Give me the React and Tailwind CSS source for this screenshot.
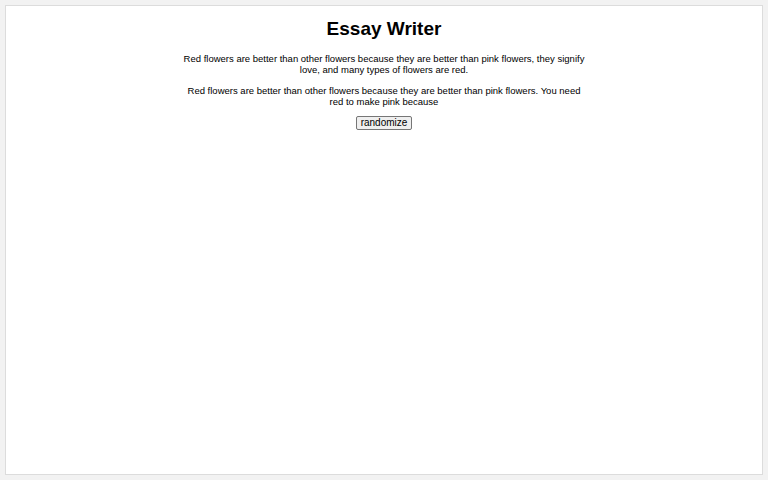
import React, { useState } from 'react';

const essays = [
  'Red flowers are better than other flowers because they are better than pink flowers, they signify love, and many types of flowers are red.',
  'Red flowers are better than other flowers because they are better than pink flowers. You need red to make pink because',
];

const App = () => {
  const [lines, setLines] = useState(essays);

  const shuffle = () => {
    setLines((prev) => [...prev].sort(() => Math.random() - 0.5));
  };

  return (
    <div className="min-h-[480px] w-full bg-[#f2f2f2] p-[5px] font-['Liberation_Sans',Arial,sans-serif] text-black">
      <div className="flex h-[470px] flex-col items-center border border-[#dcdcdc] bg-white pt-[9px]">
        <h1 className="text-[19px] font-bold leading-[28px]">Essay Writer</h1>
        <div className="mt-[10px] flex w-[408px] flex-col gap-[10px] text-center text-[9.5px] leading-[11px]">
          {lines.map((text, i) => (
            <p key={i}>{text}</p>
          ))}
        </div>
        <button
          onClick={shuffle}
          className="mt-[9px] flex h-[14px] items-center rounded-[2px] border border-[#767676] bg-[#efefef] px-[4px] text-[10px] leading-[12px]"
        >
          randomize
        </button>
      </div>
    </div>
  );
};

export default App;
